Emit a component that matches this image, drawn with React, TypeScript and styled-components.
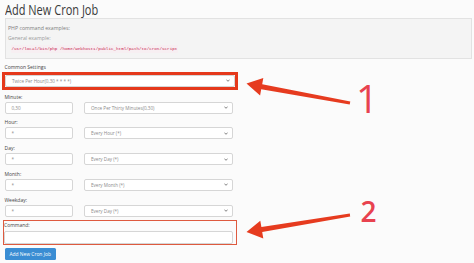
import React from 'react';
import styled, { createGlobalStyle } from 'styled-components';

const GlobalStyle = createGlobalStyle`
  html, body {
    margin: 0;
    padding: 0;
    background: #fbfbfb;
  }
  body {
    font-family: 'Open Sans', 'Liberation Sans', sans-serif;
    color: #333;
  }
`;

const Page = styled.div`
  position: relative;
  width: 474px;
  height: 263px;
  overflow: hidden;
  box-sizing: border-box;
  padding: 1px 2px 0 4.5px;
`;

const Title = styled.h1`
  margin: 0;
  height: 17px;
  font-size: 14.5px;
  line-height: 17px;
  font-weight: 400;
  color: #3a3a3a;
  white-space: nowrap;
  transform: scaleX(0.76);
  transform-origin: left center;
`;

const Well = styled.div`
  box-sizing: border-box;
  width: 467.5px;
  height: 41px;
  padding: 4px 3px 0 2.5px;
  background: #f4f4f4;
  border: 1px solid #e2e2e2;
`;

const WellLine = styled.div<{ $muted?: boolean }>`
  height: 10px;
  font-size: 5.2px;
  line-height: 10px;
  color: ${(p) => (p.$muted ? '#9a9a9a' : '#7d7d7d')};
  white-space: nowrap;
`;

const Code = styled.code`
  display: inline-block;
  margin-left: 2.5px;
  padding: 0 1px;
  font-family: 'Liberation Mono', 'DejaVu Sans Mono', monospace;
  font-size: 4.25px;
  line-height: 8px;
  color: #c7254e;
  background: #f7eff2;
  border-radius: 1px;
`;

const Form = styled.div`
  width: 228px;
  margin-top: 2.7px;
`;

const Label = styled.div<{ $h?: number }>`
  height: ${(p) => p.$h ?? 10}px;
  font-size: 5px;
  line-height: ${(p) => p.$h ?? 10}px;
  color: #444;
  white-space: nowrap;
`;

const Group = styled.div`
  margin-bottom: 3.75px;
`;

const Row = styled.div`
  display: flex;
  gap: 11.5px;
`;

const Control = styled.div<{ $w?: number; $h?: number }>`
  box-sizing: border-box;
  position: relative;
  display: flex;
  align-items: center;
  ${(p) => (p.$w ? `width: ${p.$w}px; flex: none;` : 'flex: 1;')}
  height: ${(p) => p.$h ?? 12}px;
  padding: 0 6px;
  background: #fff;
  border: 1px solid #d6d6d6;
  border-radius: 2px;
  font-size: 4.6px;
  color: #8a8a8a;
  white-space: nowrap;
`;

const Chevron = styled.svg`
  position: absolute;
  right: 3.5px;
  top: 50%;
  width: 4px;
  height: 3px;
  margin-top: -1.5px;
`;

const Highlight = styled.div<{ $thick: number; $color: string }>`
  margin: 0 -5px 0 -2.5px;
  border: ${(p) => p.$thick}px solid ${(p) => p.$color};
`;

const CommandBox = styled(Highlight)`
  margin: 2px -4px 0 -2px;
  padding: 0 2.5px 0.5px 0.5px;
`;

const Button = styled.button`
  display: block;
  margin-top: 3px;
  height: 12px;
  padding: 0 5px;
  border: none;
  border-radius: 1.5px;
  background: #3a8dd3;
  color: #fff;
  font-family: 'Open Sans', 'Liberation Sans', sans-serif;
  font-size: 4.9px;
  line-height: 12px;
  white-space: nowrap;
`;

const Overlay = styled.svg`
  position: absolute;
  left: 0;
  top: 0;
  width: 474px;
  height: 263px;
  pointer-events: none;
`;

const Arrow = ({ d }: { d: string }) => <path d={d} fill="#e63b1f" />;

const Select = ({ text, h }: { text: string; h?: number }) => (
  <Control $h={h}>
    {text}
    <Chevron viewBox="0 0 4 3">
      <path d="M0.4 0.6 L2 2.3 L3.6 0.6" fill="none" stroke="#666" strokeWidth="0.8" />
    </Chevron>
  </Control>
);

const fields = [
  { label: 'Minute:', value: '0,30', option: 'Once Per Thirty Minutes(0,30)' },
  { label: 'Hour:', value: '*', option: 'Every Hour (*)' },
  { label: 'Day:', value: '*', option: 'Every Day (*)' },
  { label: 'Month:', value: '*', option: 'Every Month (*)' },
  { label: 'Weekday:', value: '*', option: 'Every Day (*)' },
];

export default function App() {
  return (
    <>
      <GlobalStyle />
      <Page>
        <Title>Add New Cron Job</Title>
        <Well>
          <WellLine>PHP command examples:</WellLine>
          <WellLine $muted>General example:</WellLine>
          <WellLine>
            <Code>/usr/local/bin/php /home/webhost1/public_html/path/to/cron/script</Code>
          </WellLine>
        </Well>

        <Form>
          <Label>Common Settings</Label>
          <Highlight $thick={3.2} $color="#e5391c">
            <Select text="Twice Per Hour(0,30 * * * *)" h={12.6} />
          </Highlight>
          <div style={{ height: 1.3 }} />

          {fields.map((f) => (
            <Group key={f.label}>
              <Label>{f.label}</Label>
              <Row>
                <Control $w={68}>{f.value}</Control>
                <Select text={f.option} />
              </Row>
            </Group>
          ))}

          <CommandBox $thick={1.5} $color="#de5a3f">
            <Label $h={9.5}>Command:</Label>
            <Control $h={13} />
          </CommandBox>

          <Button>Add New Cron Job</Button>
        </Form>

        <Overlay viewBox="0 0 474 263">
          <Arrow d="M246.5 83.5 L263.3 77.9 L262.2 84.2 L350.3 101.5 L349.7 104.5 L261.2 89.2 L260.1 95.5 Z" />
          <Arrow d="M246.5 232 L260.3 220.7 L261.4 227.1 L349.8 213.5 L350.2 216.5 L262.2 232.1 L263.3 238.5 Z" />
          <text
            x="356"
            y="113"
            fill="#e8424f"
            fontFamily="'Open Sans', 'Liberation Sans', sans-serif"
            fontSize="39"
            fontWeight="500"
          >
            1
          </text>
          <text
            x="360.5"
            y="222"
            fill="#e8424f"
            fontFamily="'Open Sans', 'Liberation Sans', sans-serif"
            fontSize="28"
            fontWeight="600"
          >
            2
          </text>
        </Overlay>
      </Page>
    </>
  );
}
